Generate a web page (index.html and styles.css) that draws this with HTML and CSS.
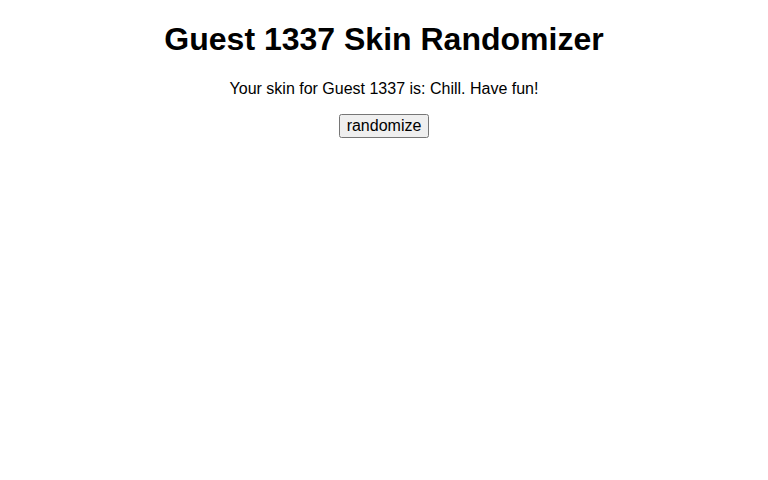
FILE: index.html
```html
<!DOCTYPE html>
<html lang="en">
<head>
    <meta charset="UTF-8">
    <meta name="viewport" content="width=device-width, initial-scale=1.0">
    <title>Guest 1337 Skin Randomizer</title>
    <link rel="stylesheet" href="styles.css">
</head>
<body>
    <h1>Guest 1337 Skin Randomizer</h1>
    <p id="result">Your skin for Guest 1337 is: Chill. Have fun!</p>
    <button class="random-btn" onclick="randomize()">randomize</button>

    <script>
        const skins = ['Chill', 'Classic', 'Noob', 'Shadow', 'Neon', 'Retro'];

        function randomize() {
            let skin = skins[Math.floor(Math.random() * skins.length)];
            document.getElementById('result').textContent = 'Your skin for Guest 1337 is: ' + skin + '. Have fun!';
        }
    </script>
</body>
</html>
```

FILE: styles.css
```css
body {
    font-family: "Liberation Sans", Arial, sans-serif;
    margin: 0;
    text-align: center;
}

.random-btn {
    font-family: "Liberation Sans", Arial, sans-serif;
    font-size: 16px;
    cursor: pointer;
}
```
